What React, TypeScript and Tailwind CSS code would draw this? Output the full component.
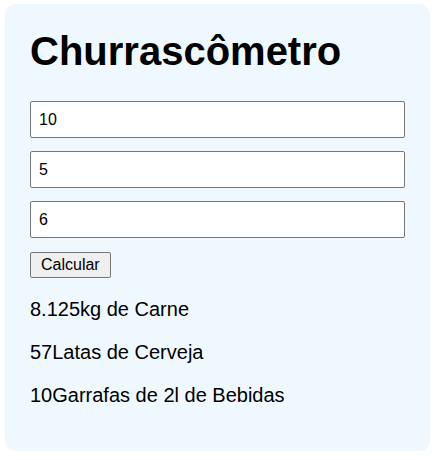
import { useState } from 'react';

const INPUT =
  'block h-[37px] w-[375px] rounded-[2px] border border-[#767676] bg-white px-[8px] text-[16px] text-black outline-none';

export default function App() {
  const [adultos, setAdultos] = useState('10');
  const [criancas, setCriancas] = useState('5');
  const [duracao, setDuracao] = useState('6');

  return (
    <div className="bg-white p-[5px] pt-[4px] font-['Liberation_Sans',Arial,sans-serif] text-black">
      <div className="w-[425px] h-[447px] rounded-[10px] bg-[#f0f8ff] px-[25px] pt-[24px]">
        <h1 className="text-[40px] font-bold leading-[46px]">Churrascômetro</h1>
        <div className="mt-[27px] flex flex-col gap-[13px]">
          <input className={INPUT} value={adultos} onChange={(e) => setAdultos(e.target.value)} />
          <input className={INPUT} value={criancas} onChange={(e) => setCriancas(e.target.value)} />
          <input className={INPUT} value={duracao} onChange={(e) => setDuracao(e.target.value)} />
        </div>
        <button
          type="button"
          className="mt-[14px] h-[26px] rounded-[2px] border border-[#767676] bg-[#efefef] px-[10px] text-[16px] leading-none"
        >
          Calcular
        </button>
        <div className="mt-[20px] flex flex-col gap-[20px] text-[20px] leading-[23px]">
          <p>8.125kg de Carne</p>
          <p>57Latas de Cerveja</p>
          <p>10Garrafas de 2l de Bebidas</p>
        </div>
      </div>
    </div>
  );
}
